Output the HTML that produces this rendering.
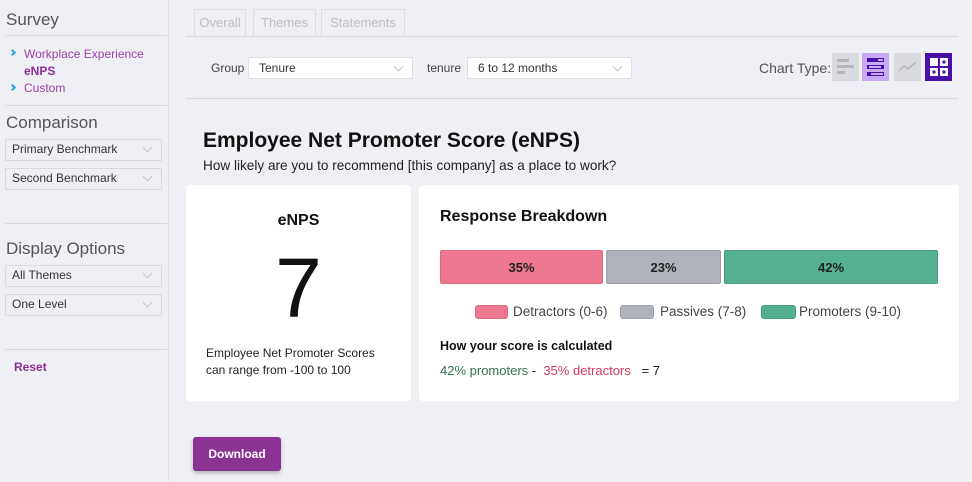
<!DOCTYPE html>
<html><head><meta charset="utf-8"><style>
*{margin:0;padding:0;box-sizing:border-box}
body{width:972px;height:482px;background:#eff0f5;font-family:"Liberation Sans",Arial,sans-serif;position:relative;overflow:hidden;color:#222}
.a{position:absolute}
.hl{position:absolute;height:1px;background:#d8d9de}
.sel{position:absolute;background:#eff0f5;border:1px solid #d9dadf;font-size:12px;color:#333;padding-left:6px;line-height:19px}
.sel2{position:absolute;background:#fff;border:1px solid #dfe0e5;font-size:12px;color:#333;padding-left:10px;line-height:20px}
.chev{position:absolute;right:10px;top:4px;width:7px;height:7px;border-right:1px solid #c2c3c8;border-bottom:1px solid #c2c3c8;transform:rotate(45deg)}
.sh{font-size:17px;color:#555}
.tab{position:absolute;top:9px;height:28px;border:1px solid #dcdde2;border-bottom:none;color:#bcbdc2;font-size:13px;text-align:center;line-height:26px}
.nav{font-size:12px;color:#9a45a5}
.card{position:absolute;background:#fff;border-radius:4px}
.bar{position:absolute;top:250px;height:34px;font-size:13px;font-weight:bold;text-align:center;line-height:34px;color:#222;border-radius:2px}
.sw{position:absolute;top:305px;height:14px;border-radius:3px}
.lg{position:absolute;top:304px;font-size:13.5px;color:#444}
.ic{position:absolute;top:53px;width:27px;height:28px}
.arr{position:absolute;width:5px;height:5px;border-right:2px solid #2aa7e0;border-top:2px solid #2aa7e0;transform:rotate(45deg)}
</style></head><body>
<div class="a" style="left:168px;top:0;width:1px;height:482px;background:#dcdde2"></div>
<div class="a sh" style="left:6px;top:10px">Survey</div>
<div class="hl" style="left:5px;top:35px;width:162px"></div>
<div class="arr" style="left:10px;top:50px"></div>
<div class="a nav" style="left:24px;top:47px">Workplace Experience</div>
<div class="a nav" style="left:24px;top:64px;font-weight:bold;color:#8a2f95">eNPS</div>
<div class="arr" style="left:10px;top:85px"></div>
<div class="a nav" style="left:24px;top:81px">Custom</div>
<div class="hl" style="left:5px;top:105px;width:162px"></div>
<div class="a sh" style="left:6px;top:113px">Comparison</div>
<div class="sel" style="left:5px;top:139px;width:157px;height:22px">Primary Benchmark<span class="chev"></span></div>
<div class="sel" style="left:5px;top:168px;width:157px;height:22px">Second Benchmark<span class="chev"></span></div>
<div class="hl" style="left:5px;top:223px;width:162px"></div>
<div class="a sh" style="left:6px;top:239px">Display Options</div>
<div class="sel" style="left:5px;top:265px;width:157px;height:22px">All Themes<span class="chev"></span></div>
<div class="sel" style="left:5px;top:294px;width:157px;height:22px">One Level<span class="chev"></span></div>
<div class="hl" style="left:5px;top:349px;width:162px"></div>
<div class="a" style="left:14px;top:360px;font-size:12px;font-weight:bold;color:#8a2f95">Reset</div>

<div class="tab" style="left:194px;width:52px">Overall</div>
<div class="tab" style="left:253px;width:63px">Themes</div>
<div class="tab" style="left:321px;width:84px">Statements</div>
<div class="hl" style="left:186px;top:36px;width:772px"></div>
<div class="a" style="left:211px;top:61px;font-size:12px;color:#444">Group</div>
<div class="sel2" style="left:248px;top:57px;width:165px;height:22px">Tenure<span class="chev" style="top:5px"></span></div>
<div class="a" style="left:427px;top:61px;font-size:12px;color:#444">tenure</div>
<div class="sel2" style="left:467px;top:57px;width:165px;height:22px">6 to 12 months<span class="chev" style="top:5px"></span></div>
<div class="a" style="left:759px;top:60px;font-size:14px;color:#555">Chart Type:</div>
<svg class="ic" style="left:832px;background:#d9dadf" viewBox="0 0 27 28"><rect x="5" y="6" width="12" height="3" fill="#b5b6bb"/><rect x="5" y="12" width="17" height="3" fill="#b5b6bb"/><rect x="5" y="18" width="8" height="3" fill="#b5b6bb"/></svg>
<svg class="ic" style="left:862px;background:#c7a9f6" viewBox="0 0 27 28"><rect x="5" y="5" width="17" height="4" fill="#4a0fa8"/><rect x="5" y="12" width="17" height="4" fill="#4a0fa8"/><rect x="5" y="19" width="17" height="4" fill="#4a0fa8"/><rect x="16" y="6" width="5" height="2" fill="#c7a9f6"/><rect x="7" y="13" width="12" height="2" fill="#c7a9f6"/><rect x="9" y="20" width="12" height="2" fill="#c7a9f6"/></svg>
<svg class="ic" style="left:894px;background:#d9dadf" viewBox="0 0 27 28"><polyline points="5,18 10,13 14,16 22,9" fill="none" stroke="#b5b6bb" stroke-width="1.5"/></svg>
<svg class="ic" style="left:925px;background:#4a0fa8" viewBox="0 0 27 28"><rect x="5" y="5" width="8" height="8" fill="#fff"/><rect x="15" y="5" width="8" height="8" fill="#fff"/><rect x="5" y="15" width="8" height="8" fill="#fff"/><rect x="15" y="15" width="8" height="8" fill="#fff"/><rect x="17.5" y="7.5" width="3" height="3" fill="#4a0fa8"/><rect x="7.5" y="17.5" width="3" height="3" fill="#4a0fa8"/><rect x="17.5" y="17.5" width="3" height="3" fill="#4a0fa8"/></svg>
<div class="hl" style="left:186px;top:98px;width:772px"></div>

<div class="a" style="left:203px;top:129px;font-size:21px;font-weight:bold;color:#111">Employee Net Promoter Score (eNPS)</div>
<div class="a" style="left:203px;top:158px;font-size:13.6px;color:#222">How likely are you to recommend [this company] as a place to work?</div>

<div class="card" style="left:186px;top:185px;width:225px;height:216px"></div>
<div class="a" style="left:186px;top:212px;width:225px;text-align:center;font-size:16px;font-weight:bold;color:#111">eNPS</div>
<div class="a" style="left:186px;top:246px;width:225px;text-align:center;font-size:84px;line-height:84px;color:#111">7</div>
<div class="a" style="left:206px;top:345px;font-size:12px;line-height:17px;color:#222">Employee Net Promoter Scores<br>can range from -100 to 100</div>

<div class="card" style="left:419px;top:185px;width:540px;height:216px"></div>
<div class="a" style="left:440px;top:208px;font-size:16px;font-weight:bold;color:#111">Response Breakdown</div>
<div class="bar" style="left:440px;width:163px;background:#ee7791;border:1px solid #e06a84">35%</div>
<div class="bar" style="left:606px;width:115px;background:#afb1bb;border:1px solid #9d9fa8">23%</div>
<div class="bar" style="left:724px;width:214px;background:#54b08f;border:1px solid #479d7e">42%</div>
<div class="sw" style="left:475px;width:33px;background:#ee7791;border:1px solid #e06a84"></div>
<div class="lg" style="left:513px">Detractors (0-6)</div>
<div class="sw" style="left:620px;width:34px;background:#afb1bb;border:1px solid #9d9fa8"></div>
<div class="lg" style="left:660px">Passives (7-8)</div>
<div class="sw" style="left:761px;width:35px;background:#54b08f;border:1px solid #479d7e"></div>
<div class="lg" style="left:799px">Promoters (9-10)</div>
<div class="a" style="left:440px;top:339px;font-size:12.5px;font-weight:bold;color:#111">How your score is calculated</div>
<div class="a" style="left:440px;top:363px;font-size:13px;color:#222;white-space:pre"><span style="color:#2e7050">42% promoters</span> -  <span style="color:#d03c5c">35% detractors</span>   = 7</div>

<div class="a" style="left:193px;top:437px;width:88px;height:34px;background:#8b3393;border-radius:3px;color:#fff;font-size:12px;font-weight:bold;text-align:center;line-height:34px;box-shadow:0 2px 4px rgba(0,0,0,.25)">Download</div>
</body></html>
